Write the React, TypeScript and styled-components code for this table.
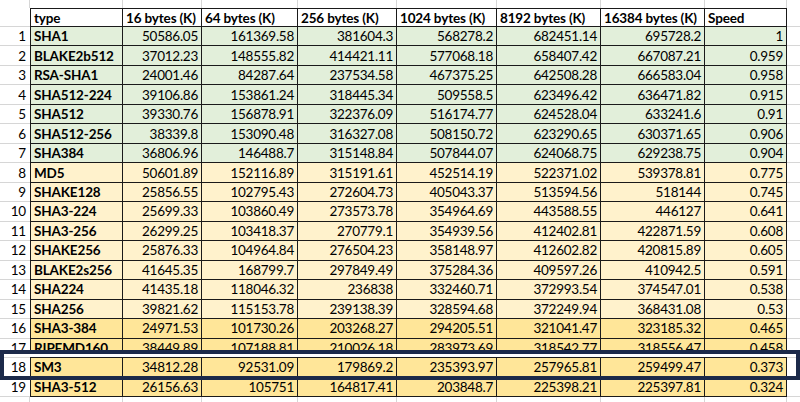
import React from "react";
import styled, { createGlobalStyle } from "styled-components";

const Global = createGlobalStyle`
  html, body { margin: 0; padding: 0; background: #ffffff; }
  body { font-family: Lato, "Liberation Sans", sans-serif; }
`;

type Row = { name: string; v: string[]; tone: "green" | "cream" | "gold" };

const headers = [
  "type",
  "16 bytes (K)",
  "64 bytes (K)",
  "256 bytes (K)",
  "1024 bytes (K)",
  "8192 bytes (K)",
  "16384 bytes (K)",
  "Speed",
];

const raw: [string, string][] = [
  ["SHA1", "50586.05 161369.58 381604.3 568278.2 682451.14 695728.2 1"],
  ["BLAKE2b512", "37012.23 148555.82 414421.11 577068.18 658407.42 667087.21 0.959"],
  ["RSA-SHA1", "24001.46 84287.64 237534.58 467375.25 642508.28 666583.04 0.958"],
  ["SHA512-224", "39106.86 153861.24 318445.34 509558.5 623496.42 636471.82 0.915"],
  ["SHA512", "39330.76 156878.91 322376.09 516174.77 624528.04 633241.6 0.91"],
  ["SHA512-256", "38339.8 153090.48 316327.08 508150.72 623290.65 630371.65 0.906"],
  ["SHA384", "36806.96 146488.7 315148.84 507844.07 624068.75 629238.75 0.904"],
  ["MD5", "50601.89 152116.89 315191.61 452514.19 522371.02 539378.81 0.775"],
  ["SHAKE128", "25856.55 102795.43 272604.73 405043.37 513594.56 518144 0.745"],
  ["SHA3-224", "25699.33 103860.49 273573.78 354964.69 443588.55 446127 0.641"],
  ["SHA3-256", "26299.25 103418.37 270779.1 354939.56 412402.81 422871.59 0.608"],
  ["SHAKE256", "25876.33 104964.84 276504.23 358148.97 412602.82 420815.89 0.605"],
  ["BLAKE2s256", "41645.35 168799.7 297849.49 375284.36 409597.26 410942.5 0.591"],
  ["SHA224", "41435.18 118046.32 236838 332460.71 372993.54 374547.01 0.538"],
  ["SHA256", "39821.62 115153.78 239138.39 328594.68 372249.94 368431.08 0.53"],
  ["SHA3-384", "24971.53 101730.26 203268.27 294205.51 321041.47 323185.32 0.465"],
  ["RIPEMD160", "38449.89 107188.81 210026.18 283973.69 318542.77 318556.47 0.458"],
  ["SM3", "34812.28 92531.09 179869.2 235393.97 257965.81 259499.47 0.373"],
  ["SHA3-512", "26156.63 105751 164817.41 203848.7 225398.21 225397.81 0.324"],
];

const rows: Row[] = raw.map(([name, s], i) => ({
  name,
  v: s.split(" "),
  tone: i < 7 ? "green" : i < 15 ? "cream" : "gold",
}));

const toneColor = { green: "#e2efda", cream: "#fff2cc", gold: "#ffe699", white: "#ffffff" };

const GRID = "#d6d6d6";
const LINE = "#1a1a1a";

const Sheet = styled.div`
  position: relative;
  width: 800px;
  height: 402px;
  overflow: hidden;
  display: grid;
  grid-template-columns: 30px 93px 79px 96px 99px 100px 104px 104px 82px 13px;
  grid-template-rows: 8px 19px repeat(19, 19.47px) 1fr;
  font-size: 13.5px;
  color: #000;
`;

const Strip = styled.div<{ $last?: boolean }>`
  box-sizing: border-box;
  border-right: ${(p) => (p.$last ? "none" : `1px solid ${GRID}`)};
`;

const RowNum = styled.div`
  box-sizing: border-box;
  border-bottom: 1px solid ${GRID};
  display: flex;
  align-items: center;
  justify-content: flex-end;
  padding-right: 4px;
  letter-spacing: -0.2px;
`;

const Spare = styled.div`
  box-sizing: border-box;
  border-bottom: 1px solid ${GRID};
`;

const Cell = styled.div<{ $bg: string; $num?: boolean; $bold?: boolean; $first?: boolean; $top?: boolean }>`
  box-sizing: border-box;
  background: ${(p) => p.$bg};
  border-right: 1px solid ${LINE};
  border-bottom: 1px solid ${LINE};
  border-left: ${(p) => (p.$first ? `1px solid ${LINE}` : "none")};
  border-top: ${(p) => (p.$top ? `1px solid ${LINE}` : "none")};
  display: flex;
  align-items: center;
  justify-content: ${(p) => (p.$num ? "flex-end" : "flex-start")};
  padding: 0 3px;
  font-weight: ${(p) => (p.$bold ? 700 : 400)};
  letter-spacing: ${(p) => (p.$bold ? "-0.15px" : "-0.25px")};
  white-space: nowrap;
  overflow: hidden;
`;

const Highlight = styled.div`
  position: absolute;
  left: 0;
  top: 350px;
  width: 800px;
  height: 30px;
  box-sizing: border-box;
  border: 4px solid #1c2a4a;
  box-shadow: inset 0 3px 0 #ffffff;
  pointer-events: none;
`;

export default function App() {
  return (
    <>
      <Global />
      <Sheet>
        {Array.from({ length: 10 }).map((_, i) => (
          <Strip key={`t${i}`} $last={i === 9} />
        ))}
        <RowNum />
        {headers.map((h, i) => (
          <Cell key={h} $bg={toneColor.white} $bold $first={i === 0} $top>
            {h}
          </Cell>
        ))}
        <Spare />
        {rows.map((r, ri) => (
          <React.Fragment key={r.name}>
            <RowNum>{ri + 1}</RowNum>
            <Cell $bg={toneColor[r.tone]} $bold $first>
              {r.name}
            </Cell>
            {r.v.map((x, ci) => (
              <Cell key={ci} $bg={toneColor[r.tone]} $num>
                {x}
              </Cell>
            ))}
            <Spare />
          </React.Fragment>
        ))}
        {Array.from({ length: 10 }).map((_, i) => (
          <Strip key={`b${i}`} $last={i === 9} />
        ))}
        <Highlight />
      </Sheet>
    </>
  );
}
